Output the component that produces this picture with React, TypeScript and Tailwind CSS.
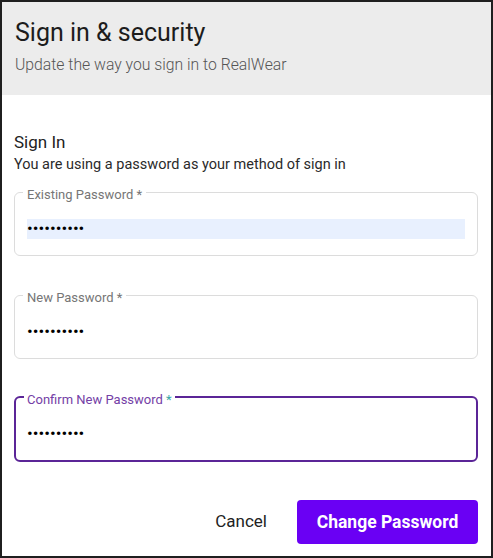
import React from 'react'

interface PasswordFieldProps {
  label: string
  value: string
  focused?: boolean
  autofilled?: boolean
}

function PasswordField({ label, value, focused, autofilled }: PasswordFieldProps) {
  return (
    <fieldset
      className={
        focused
          ? 'h-[73px] rounded-[6px] border-2 border-[#5b2597] px-[11px]'
          : 'h-[72px] rounded-[6px] border border-[#dcdcdc] px-[12px]'
      }
    >
      <legend
        className={
          focused
            ? 'relative top-[3px] ml-[-3px] px-[3px] text-[13px] leading-[16px] text-[#7440a6]'
            : 'relative top-[3px] ml-[-4px] px-[4px] text-[13px] leading-[16px] text-[#767676]'
        }
      >
        {label} <span className={focused ? 'text-[#3aa7a7]' : ''}>*</span>
      </legend>
      <input
        type="password"
        readOnly
        value={value}
        className={
          'mt-[19px] block h-[20px] w-[438px] text-[17px] text-black outline-none ' +
          (autofilled ? 'bg-[#e8f0fe]' : 'bg-transparent')
        }
      />
    </fieldset>
  )
}

export default function App() {
  return (
    <div
      className="flex h-[558px] w-[493px] flex-col border-2 border-[#1f1f1f] bg-white"
      style={{ fontFamily: 'Roboto, "Liberation Sans", sans-serif' }}
    >
      <div className="h-[93px] bg-[#ececec] pl-[13px] pt-[15px]">
        <h1 className="text-[25px] leading-[32px] font-normal text-[#1c1c1c]">
          Sign in &amp; security
        </h1>
        <p className="mt-[5px] text-[15.75px] leading-[22px] font-light text-[#555]">
          Update the way you sign in to RealWear
        </p>
      </div>
      <div className="flex flex-col pl-[12px] pr-[13px] pt-[35px]">
        <h2 className="text-[17px] leading-[24px] text-[#222]">Sign In</h2>
        <p className="text-[14.5px] leading-[22px] text-[#2a2a2a]">
          You are using a password as your method of sign in
        </p>
        <div className="mt-[8px] flex flex-col gap-[31px]">
          <PasswordField label="Existing Password" value="••••••••••" autofilled />
          <PasswordField label="New Password" value="••••••••••" />
          <div className="-mt-[1px]">
            <PasswordField label="Confirm New Password" value="••••••••••" focused />
          </div>
        </div>
        <div className="mt-[38px] flex items-center justify-end">
          <button className="mr-[30px] text-[17px] text-[#222]">Cancel</button>
          <button className="h-[44px] w-[181px] rounded-[4px] bg-[#6a00f4] text-[17.5px] font-bold text-white">
            Change Password
          </button>
        </div>
      </div>
    </div>
  )
}
